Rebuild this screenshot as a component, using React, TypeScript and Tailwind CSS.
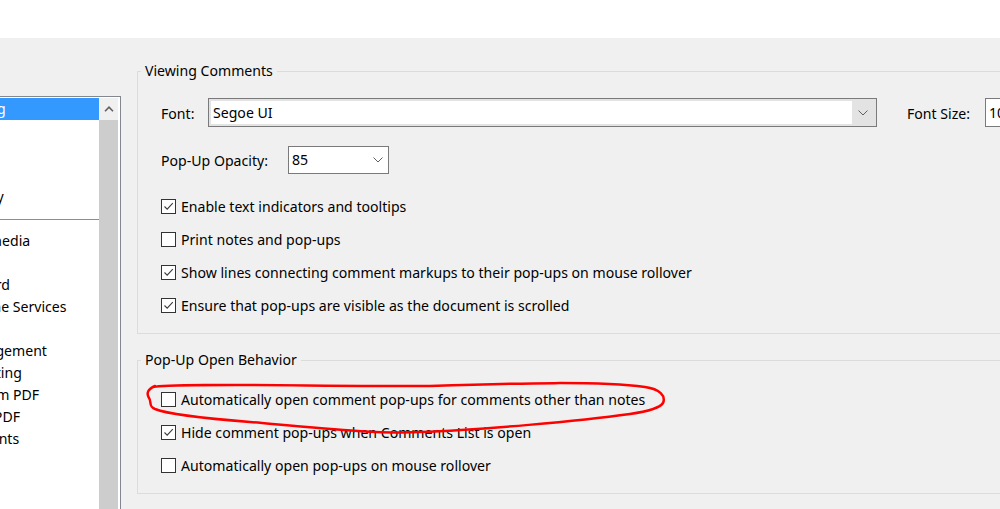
import type { ReactNode } from "react";

const categories: ReadonlyArray<string | null> = [
  "Commenting",
  "Documents",
  "Full Screen",
  "General",
  "Page Display",
  null,
  "3D & Multimedia",
  "Accessibility",
  "Action Wizard",
  "Adobe Online Services",
  "Catalog",
  "Color Management",
  "Content Editing",
  "Convert From PDF",
  "Convert To PDF",
  "Email Accounts",
  "Forms",
  "Identity",
  "Internet",
];

function Chevron({ className }: { readonly className?: string }) {
  return (
    <svg viewBox="0 0 10 6" className={className} fill="none">
      <path d="M0.5 0.5 L5 5 L9.5 0.5" stroke="#606060" strokeWidth="1" />
    </svg>
  );
}

function Checkbox({ checked, label }: { readonly checked: boolean; readonly label: ReactNode }) {
  return (
    <label className="flex h-[33px] items-center gap-[5px] whitespace-nowrap">
      <span className="flex h-[15px] w-[15px] shrink-0 items-center justify-center border border-[#333333] bg-white">
        {checked ? (
          <svg viewBox="0 0 13 13" className="h-[13px] w-[13px]" fill="none">
            <path d="M2.5 6.5 L5.2 9.2 L10.8 3.2" stroke="#3c3c3c" strokeWidth="1.1" />
          </svg>
        ) : null}
      </span>
      <span>{label}</span>
    </label>
  );
}

function GroupBox({
  title,
  className,
  children,
}: {
  readonly title: string;
  readonly className?: string;
  readonly children: ReactNode;
}) {
  return (
    <fieldset className={`w-[900px] border border-[#dcdcdc] ${className ?? ""}`}>
      <legend className="ml-[3px] px-[4px] leading-[20px]">{title}</legend>
      {children}
    </fieldset>
  );
}

function CategoryList() {
  return (
    <div className="mt-[35px] flex h-[430px] w-[121px] shrink-0 border-t border-r border-[#828790] bg-white pt-px">
      <ul className="w-[99px] shrink-0 overflow-hidden">
        {categories.map((name, index) =>
          name === null ? (
            <li key={`sep-${index}`} className="flex h-[22px] items-center">
              <span className="h-px w-full bg-[#4a9df0]" />
            </li>
          ) : (
            <li
              key={name}
              className={`flex h-[22px] items-center whitespace-nowrap ${
                index === 0 ? "bg-[#3399ff] text-white" : ""
              }`}
            >
              <span className="ml-[-81px]">{name}</span>
            </li>
          ),
        )}
      </ul>
      <div className="flex w-[19px] shrink-0 flex-col bg-[#cdcdcd]">
        <div className="flex h-[22px] items-center justify-center bg-[#f0f0f0]">
          <svg viewBox="0 0 10 6" className="h-[6px] w-[10px]" fill="none">
            <path d="M1 5.2 L5 1.2 L9 5.2" stroke="#606060" strokeWidth="1.6" />
          </svg>
        </div>
      </div>
    </div>
  );
}

export default function App() {
  return (
    <div
      className="relative h-[509px] w-[1000px] overflow-hidden bg-[#f0f0f0] text-[14.1px] text-black"
      style={{ fontFamily: '"Segoe UI", "Noto Sans", sans-serif' }}
    >
      <div className="h-[38px] bg-white" />
      <div className="flex pt-[23px]">
        <CategoryList />
        <div className="ml-[16px] flex shrink-0 flex-col">
          <GroupBox title="Viewing Comments">
            <div className="pl-[23px] pt-[17px] pb-[11px]">
              <div className="flex items-center">
                <span className="w-[47px] pt-[2px]">Font:</span>
                <div className="flex h-[29px] w-[669px] border border-[#7a7a7a] bg-[#e3e3e3] p-[2px]">
                  <div className="flex flex-1 items-center bg-white pl-[2px]">Segoe UI</div>
                  <div className="flex w-[22px] items-center justify-center">
                    <Chevron className="h-[6px] w-[10px]" />
                  </div>
                </div>
                <span className="ml-[30px] w-[78px] pt-[2px]">Font Size:</span>
                <div className="flex h-[29px] w-[80px] items-center border border-[#7a7a7a] bg-white pl-[3px]">
                  10
                </div>
              </div>
              <div className="mt-[19px] flex items-center">
                <span className="w-[127px] pt-[2px]">Pop-Up Opacity:</span>
                <div className="flex h-[28px] w-[101px] items-center justify-between border border-[#7a7a7a] bg-white pl-[3px] pr-[5px]">
                  <span>85</span>
                  <Chevron className="h-[6px] w-[10px]" />
                </div>
              </div>
              <div className="mt-[16px]">
                <Checkbox checked label="Enable text indicators and tooltips" />
                <Checkbox checked={false} label="Print notes and pop-ups" />
                <Checkbox
                  checked
                  label="Show lines connecting comment markups to their pop-ups on mouse rollover"
                />
                <Checkbox checked label="Ensure that pop-ups are visible as the document is scrolled" />
              </div>
            </div>
          </GroupBox>
          <GroupBox title="Pop-Up Open Behavior" className="mt-[16px]">
            <div className="pl-[23px] pt-[13px] pb-[11px]">
              <Checkbox
                checked={false}
                label="Automatically open comment pop-ups for comments other than notes"
              />
              <Checkbox checked label="Hide comment pop-ups when Comments List is open" />
              <Checkbox checked={false} label="Automatically open pop-ups on mouse rollover" />
            </div>
          </GroupBox>
        </div>
      </div>
      {/* hand-drawn highlight */}
      <svg
        className="pointer-events-none absolute inset-0 h-[509px] w-[1000px]"
        viewBox="0 0 1000 509"
        fill="none"
      >
        <path
          d="M153 387 C170 383, 300 386, 430 386 C520 383, 600 381, 645 387 C660 389, 666 396, 663 403 C660 408, 650 411, 630 414 C580 421, 480 430, 420 432 C380 434, 330 429, 250 422 C200 418, 165 413, 155 409 C148 406, 152 402, 149 398 C146 393, 148 389, 155 386"
          stroke="#ff0000"
          strokeWidth="2.5"
          strokeLinecap="round"
        />
      </svg>
    </div>
  );
}
